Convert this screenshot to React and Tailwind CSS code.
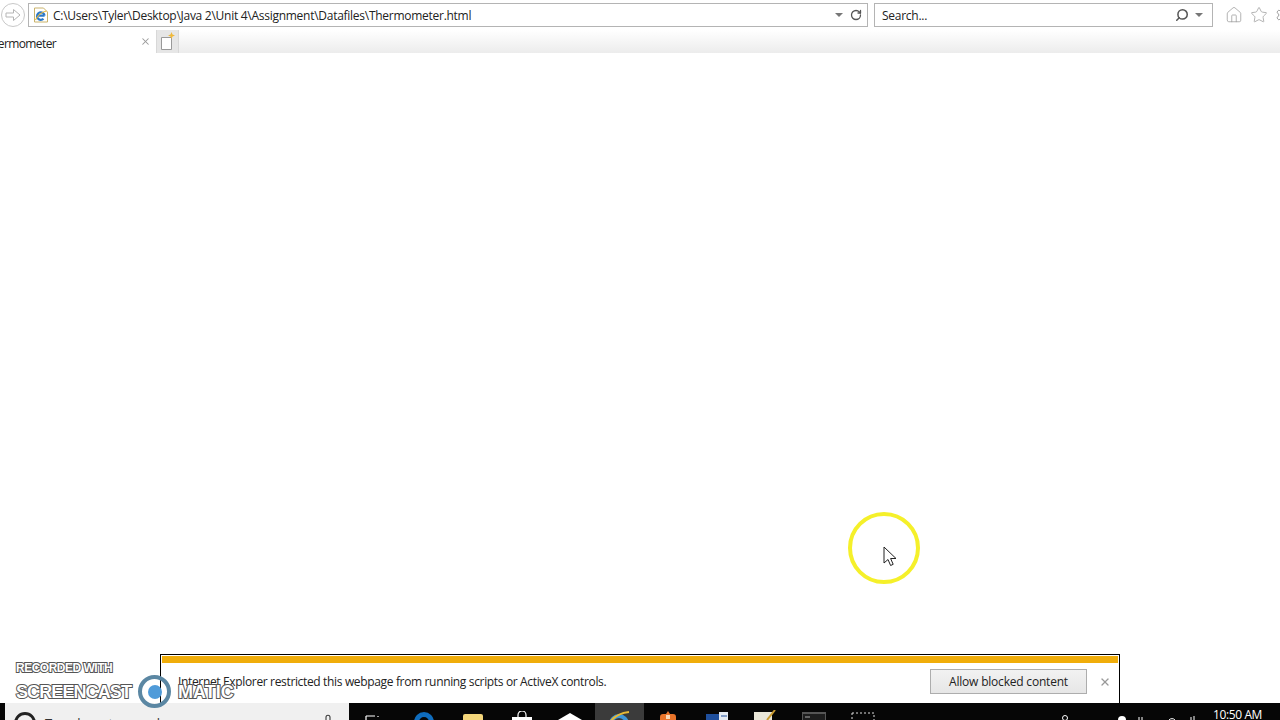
import React from "react";
import { Home, Star, Settings, Search, RotateCw, X, Mic } from "lucide-react";

const font = "font-['Open_Sans','Noto_Sans',sans-serif]";

function IeIcon({ size = 16 }) {
  return (
    <svg width={size} height={size} viewBox="0 0 16 16">
      <path d="M1.5 1h9l4 4v10h-13z" fill="#fff" stroke="#c9b26a" strokeWidth="1" />
      <path d="M4.6 8.6h7M11.6 8.6a3.8 3.8 0 1 0-1.1 3.2" fill="none" stroke="#2b79c9" strokeWidth="2.2" />
      <path d="M2.5 13c2-4 6-8 11-9" fill="none" stroke="#e8b83a" strokeWidth="1.2" />
    </svg>
  );
}

function TaskIcon({ children, active }) {
  return (
    <div className={`flex h-full w-[48.75px] shrink-0 justify-center ${active ? "bg-[#3b3b3b]" : ""}`}>
      {children}
    </div>
  );
}

export default function App() {
  return (
    <div className={`relative flex h-[720px] w-[1280px] flex-col overflow-hidden bg-white text-[12px] text-[#222] ${font}`}>
      {/* Toolbar */}
      <div className="flex h-[30px] shrink-0 items-center overflow-hidden">
        <div className="ml-[1px] flex h-[24px] w-[24px] shrink-0 items-center justify-center rounded-full border border-[#c8c8c8]">
          <svg width="16" height="14" viewBox="0 0 16 14">
            <path d="M1 5h7.5V1.5L15 7l-6.5 5.5V9H1z" fill="#fff" stroke="#b5b5b5" strokeWidth="1" />
          </svg>
        </div>
        <div className="ml-[3px] flex h-[24px] w-[840px] shrink-0 items-center border border-[#b4b4b4] pl-[4px] pr-[5px]">
          <IeIcon />
          <span className="ml-[4px] flex-1 truncate pt-[1px] tracking-[-0.27px]">C:\Users\Tyler\Desktop\Java 2\Unit 4\Assignment\Datafiles\Thermometer.html</span>
          <span className="mr-[7px] h-0 w-0 border-x-[4px] border-t-[4px] border-x-transparent border-t-[#777]" />
          <RotateCw size={12} strokeWidth={2.6} className="text-[#555]" />
        </div>
        <div className="ml-[6px] flex h-[24px] w-[339px] shrink-0 items-center border border-[#b4b4b4] pl-[7px] pr-[9px]">
          <span className="flex-1 pt-[1px] tracking-[-0.27px]">Search...</span>
          <Search size={14} strokeWidth={2.6} className="-scale-x-100 text-[#555]" />
          <span className="ml-[6px] h-0 w-0 border-x-[4px] border-t-[4px] border-x-transparent border-t-[#777]" />
        </div>
        <Home size={18} strokeWidth={1} className="ml-[12px] shrink-0 text-[#999]" />
        <Star size={18} strokeWidth={1} className="ml-[7px] shrink-0 text-[#999]" />
        <Settings size={18} strokeWidth={1.2} className="ml-[7px] shrink-0 text-[#888]" />
      </div>

      {/* Tab strip */}
      <div className="flex h-[23px] shrink-0 bg-gradient-to-b from-white to-[#ececec]">
        <div className="flex w-[156px] shrink-0 items-center justify-between overflow-hidden bg-white pr-[5px]">
          <span className="-ml-[15px] pt-[4px] tracking-[-0.6px]">Thermometer</span>
          <X size={11} strokeWidth={2.2} className="text-[#999]" />
        </div>
        <div className="flex w-[23px] shrink-0 items-center justify-center border-x border-[#d8d8d8] bg-[#e6e6e6]">
          <svg width="17" height="19" viewBox="0 0 17 19">
            <path d="M2.5 5.5h10v12h-10z" fill="#fff" stroke="#999" />
            <path d="M12.5 0l1 2.5 2.5 1-2.5 1-1 2.5-1-2.5-2.5-1 2.5-1z" fill="#f0b93a" />
          </svg>
        </div>
      </div>

      {/* Page */}
      <main className="min-h-0 flex-1 bg-white" />

      {/* Taskbar */}
      <footer className="flex h-[17px] shrink-0 overflow-hidden bg-[#060606]">
        <div className="ml-[5px] flex h-[40px] w-[344px] shrink-0 items-start bg-[#f0f0f0] pl-[9px] pt-[9px] text-[#333]">
          <span className="h-[22px] w-[22px] rounded-full border-[3px] border-[#222]" />
          <span className="ml-[9px] mt-[2px] text-[13px]">Type here to search</span>
          <Mic size={16} strokeWidth={1.6} className="ml-auto mr-[13px] mt-[2px]" />
        </div>
        <div className="ml-[-1px] flex h-full">
          <TaskIcon>
            <svg width="14" height="30" viewBox="0 0 14 30" className="mt-[12px]">
              <path d="M1 1v4M1 1h9M13 1v1" stroke="#fff" strokeWidth="1.2" fill="none" />
            </svg>
          </TaskIcon>
          <div className="ml-[3px]" />
          <TaskIcon>
            <span className="mt-[9px] h-[20px] w-[20px] rounded-full border-[5px] border-[#0f6cbd]" />
          </TaskIcon>
          <TaskIcon>
            <span className="mt-[11px] h-[16px] w-[20px] rounded-t-[2px] bg-[#f3d57a]" />
          </TaskIcon>
          <TaskIcon>
            <svg width="22" height="20" viewBox="0 0 22 20" className="mt-[8px]">
              <path d="M7 6V4a4 4 0 0 1 8 0v2" fill="none" stroke="#fff" strokeWidth="1.2" />
              <rect x="1" y="6" width="20" height="14" fill="#fff" />
            </svg>
          </TaskIcon>
          <TaskIcon>
            <svg width="24" height="16" viewBox="0 0 24 16" className="mt-[10px]">
              <path d="M12 0l12 7-12 8-12-8z" fill="#fff" />
            </svg>
          </TaskIcon>
          <TaskIcon active>
            <svg width="24" height="24" viewBox="0 0 24 24" className="mt-[7px]">
              <circle cx="12" cy="14" r="8" fill="none" stroke="#3f97d9" strokeWidth="4" />
              <path d="M1 15C5 8 13 3 22 2" fill="none" stroke="#e6b936" strokeWidth="2" />
            </svg>
          </TaskIcon>
          <TaskIcon>
            <svg width="16" height="16" viewBox="0 0 16 16" className="mt-[8px]">
              <path d="M8 0l2 3h3a3 3 0 0 1 3 3v10H0V6a3 3 0 0 1 3-3h3z" fill="#e8742a" />
              <rect x="6" y="4" width="4" height="4" fill="#f9d9b8" />
            </svg>
          </TaskIcon>
          <TaskIcon>
            <svg width="22" height="16" viewBox="0 0 22 16" className="mt-[9px]">
              <rect y="2" width="14" height="14" fill="#1f4f9c" />
              <rect x="13" width="9" height="16" fill="#e6ebf3" />
              <path d="M15 4h6" stroke="#1f4f9c" />
            </svg>
          </TaskIcon>
          <TaskIcon>
            <svg width="22" height="16" viewBox="0 0 22 16" className="mt-[7px]">
              <rect y="2" width="18" height="14" fill="#e9e6d8" />
              <path d="M13 10L21 0" stroke="#c99a2e" strokeWidth="2" />
              <circle cx="7" cy="12" r="2" fill="#777" />
            </svg>
          </TaskIcon>
          <TaskIcon>
            <svg width="24" height="16" viewBox="0 0 24 16" className="mt-[9px]">
              <rect width="24" height="16" fill="#555" />
              <rect x="1" y="2" width="22" height="14" fill="#1d1d1d" />
              <path d="M3 5h5" stroke="#aaa" />
            </svg>
          </TaskIcon>
          <TaskIcon>
            <svg width="24" height="16" viewBox="0 0 24 16" className="mt-[9px]">
              <rect x="1" y="1" width="22" height="15" fill="none" stroke="#ddd" strokeDasharray="2 2" />
            </svg>
          </TaskIcon>
        </div>
        <div className="ml-auto flex items-start pr-[18px] text-white">
          <svg width="10" height="17" viewBox="0 0 10 17" className="mr-[47px] mt-[11px]">
            <circle cx="5" cy="4" r="2.5" fill="none" stroke="#fff" />
          </svg>
          <svg width="78" height="17" viewBox="0 0 78 17" className="mr-[18px] mt-[11px]">
            <circle cx="5" cy="6" r="4" fill="#fff" />
            <path d="M22 3v5M25 3v5M52 6a4 4 0 0 1 6 0M74 3v5M77 2v6" stroke="#fff" strokeWidth="1" fill="none" />
          </svg>
          <span className="mt-[5px] text-[12px] leading-[14px] tracking-[-0.4px]">10:50 AM</span>
        </div>
      </footer>

      {/* Notification bar */}
      <div className="absolute left-[160px] top-[654px] flex h-[49px] w-[960px] flex-col border border-b-0 border-black bg-white p-[1px] pb-0">
        <div className="h-[7px] shrink-0 bg-[#f0ad0a]" />
        <div className="flex min-h-0 flex-1 items-center pb-[3px] pl-[16px] pr-[7px]">
          <span className="flex-1 tracking-[-0.345px]">Internet Explorer restricted this webpage from running scripts or ActiveX controls.</span>
          <button className="flex h-[25px] w-[157px] items-center justify-center border border-[#adadad] bg-gradient-to-b from-[#f2f2f2] to-[#e6e6e6] tracking-[-0.2px]">
            Allow blocked content
          </button>
          <X size={12} strokeWidth={2.6} className="ml-[12px] text-[#999]" />
        </div>
      </div>

      {/* Screencast-O-Matic watermark */}
      <div className="absolute left-[16px] top-[661px] font-['Liberation_Sans',sans-serif] font-bold text-white [paint-order:stroke_fill] [-webkit-text-stroke:2px_#555]">
        <div className="text-[12px] leading-[15px] tracking-[-0.5px]">RECORDED WITH</div>
        <div className="-mt-[1px] flex items-center">
          <span className="w-[116px] text-[18px] leading-[24px] tracking-[-0.9px] [paint-order:stroke_fill]">SCREENCAST</span>
          <span className="ml-[6px] flex h-[33px] w-[33px] items-center justify-center rounded-full border-[4px] border-[#5b87a3]">
            <span className="h-[14px] w-[14px] rounded-full bg-[#4f9bd9]" />
          </span>
          <span className="ml-[7px] text-[18px] leading-[24px] [paint-order:stroke_fill]">MATIC</span>
        </div>
      </div>

      {/* Cursor highlight */}
      <div className="absolute left-[848px] top-[512px] h-[72px] w-[72px] rounded-full border-[4px] border-[#f5f02a]" />
      <svg width="14" height="22" viewBox="0 0 14 22" className="absolute left-[883px] top-[546px]">
        <path d="M1 1v16l4-3.5 2.6 6 2.6-1.2-2.6-5.8H13z" fill="#fff" stroke="#222" strokeWidth="1" />
      </svg>
    </div>
  );
}
